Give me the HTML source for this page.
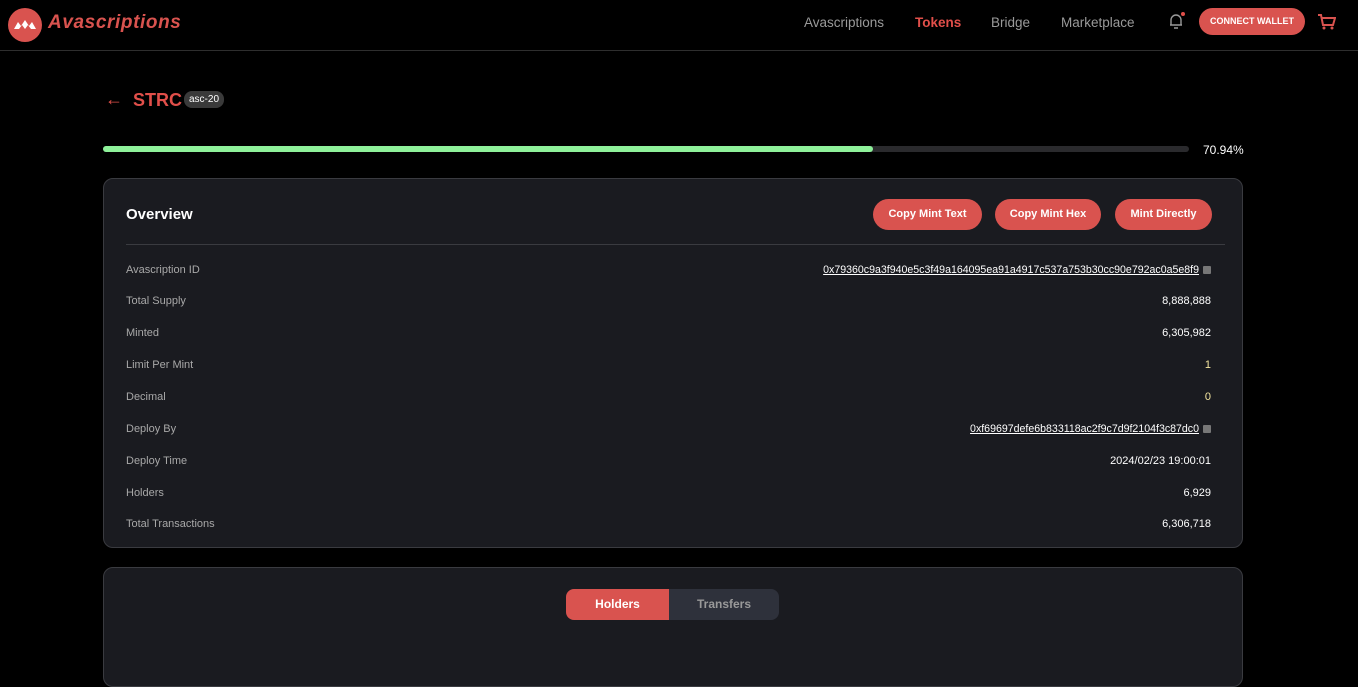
<!DOCTYPE html>
<html><head><meta charset="utf-8"><style>
*{box-sizing:border-box;margin:0;padding:0}
body{width:1358px;height:653px;overflow:hidden;background:#000;font-family:"Liberation Sans",sans-serif;color:#fff;position:relative}
.hdr{position:absolute;left:0;top:0;width:1358px;height:51px;border-bottom:1px solid #2e2e2e}
.logo{position:absolute;left:8px;top:8px;width:34px;height:34px;border-radius:50%;background:#d9534f}
.brand{position:absolute;left:48px;top:12px;font-size:19px;font-style:italic;font-weight:bold;color:#d9534f;letter-spacing:.6px}
.nav{position:absolute;top:15px;font-size:13.5px;color:#9a9a9a}
.btn{position:absolute;background:#d9534f;color:#fff;font-weight:bold;border-radius:16px;text-align:center}
.card{position:absolute;left:103px;width:1140px;background:#1a1b20;border:1px solid #3a3b40;border-radius:10px}
.row{position:absolute;left:22px;right:31px;font-size:11px;color:#a8a8a8}
.row span{position:absolute;right:0;top:0;color:#fff}
.u{text-decoration:underline;font-size:10.6px}
.cp{display:inline-block;width:8px;height:8px;background:#777;border-radius:1px;margin-left:4px;vertical-align:-1px}
</style></head><body>
<div class="hdr">
<div class="logo"><svg width="34" height="34" viewBox="0 0 34 34"><path d="M6 21 L10 14 L13 18 L17 12 L21 18 L24 14 L28 21 Z" fill="#fff"/><path d="M11 21 L14 17 L17 21Z M17 21 L20 17 L23 21Z" fill="#d9534f"/></svg></div>
<div class="brand">Avascriptions</div>
<div class="nav" style="left:804px">Avascriptions</div>
<div class="nav" style="left:915px;color:#e14f4a;font-weight:bold">Tokens</div>
<div class="nav" style="left:991px">Bridge</div>
<div class="nav" style="left:1061px">Marketplace</div>
<svg style="position:absolute;left:1167px;top:12px" width="18" height="18" viewBox="0 0 18 18"><path d="M4 13 V8 a5 5 0 0 1 10 0 V13 Z M3 13 H15 M7 16 H11" fill="none" stroke="#999" stroke-width="1.4"/><circle cx="16" cy="2" r="2" fill="#e14f4a"/></svg>
<div class="btn" style="left:1199px;top:8px;width:106px;height:27px;line-height:27px;font-size:9px">CONNECT WALLET</div>
<svg style="position:absolute;left:1317px;top:13px" width="19" height="18" viewBox="0 0 19 18"><path d="M1 2 H4 L6 12 H16 L18 5 H5" fill="none" stroke="#d9534f" stroke-width="2"/><circle cx="7" cy="15" r="1.5" fill="#d9534f"/><circle cx="15" cy="15" r="1.5" fill="#d9534f"/></svg>
</div>
<div style="position:absolute;left:105px;top:89px;font-size:18px;color:#e14f4a">←</div>
<div style="position:absolute;left:133px;top:90px;font-size:18px;font-weight:bold;color:#e14f4a">STRC</div>
<div style="position:absolute;left:184px;top:91px;width:40px;height:17px;border-radius:8px;background:#3a3a3a;font-size:10px;line-height:17px;text-align:center">asc-20</div>
<div style="position:absolute;left:103px;top:146px;width:1086px;height:6px;background:#2a2a2d;border-radius:3px"><div style="width:770px;height:6px;background:#8ef19a;border-radius:3px"></div></div>
<div style="position:absolute;left:1203px;top:143px;font-size:12px">70.94%</div>
<div class="card" style="top:178px;height:370px">
<div style="position:absolute;left:22px;top:27px;font-size:15px;font-weight:bold">Overview</div>
<div class="btn" style="left:769px;top:20px;width:109px;height:31px;line-height:31px;font-size:11px">Copy Mint Text</div>
<div class="btn" style="left:891px;top:20px;width:106px;height:31px;line-height:31px;font-size:11px">Copy Mint Hex</div>
<div class="btn" style="left:1011px;top:20px;width:97px;height:31px;line-height:31px;font-size:11px">Mint Directly</div>
<div style="position:absolute;left:22px;right:17px;top:65px;height:1px;background:#3a3b40"></div>
<div class="row" style="top:85px">Avascription ID<span><a class="u">0x79360c9a3f940e5c3f49a164095ea91a4917c537a753b30cc90e792ac0a5e8f9</a><i class="cp"></i></span></div>
<div class="row" style="top:116px">Total Supply<span>8,888,888</span></div>
<div class="row" style="top:148px">Minted<span>6,305,982</span></div>
<div class="row" style="top:180px">Limit Per Mint<span style="color:#f5e6a0">1</span></div>
<div class="row" style="top:212px">Decimal<span style="color:#f5e6a0">0</span></div>
<div class="row" style="top:244px">Deploy By<span><a class="u">0xf69697defe6b833118ac2f9c7d9f2104f3c87dc0</a><i class="cp"></i></span></div>
<div class="row" style="top:276px">Deploy Time<span>2024/02/23 19:00:01</span></div>
<div class="row" style="top:308px">Holders<span>6,929</span></div>
<div class="row" style="top:339px">Total Transactions<span>6,306,718</span></div>
</div>
<div class="card" style="top:567px;height:120px">
<div style="position:absolute;left:462px;top:21px;width:103px;height:31px;background:#d9534f;border-radius:8px 0 0 8px;font-size:12px;font-weight:bold;line-height:31px;text-align:center">Holders</div>
<div style="position:absolute;left:565px;top:21px;width:110px;height:31px;background:#2e313b;border-radius:0 8px 8px 0;font-size:12px;font-weight:bold;color:#999;line-height:31px;text-align:center">Transfers</div>
</div>
</body></html>
